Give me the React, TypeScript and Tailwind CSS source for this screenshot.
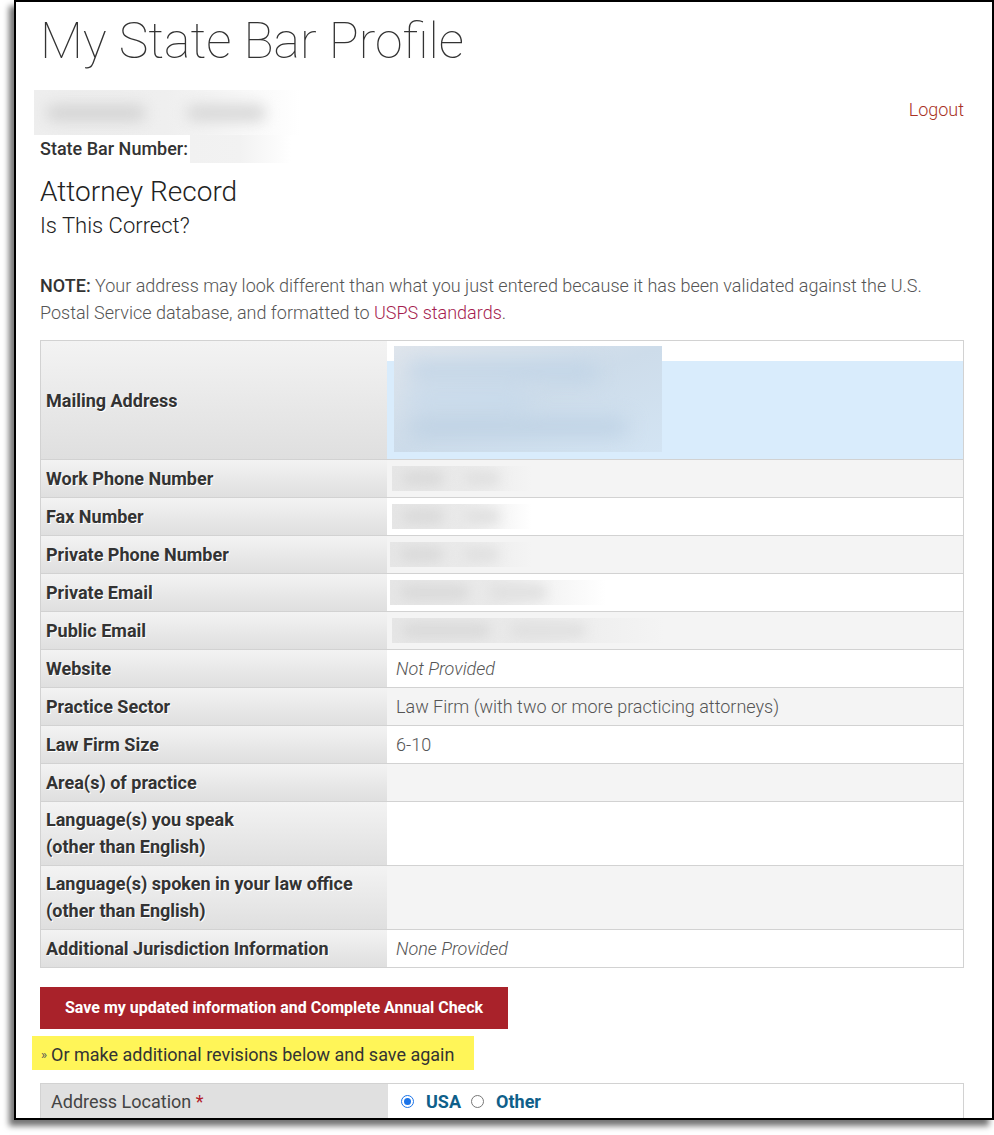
import React from "react";

const font = { fontFamily: "Roboto, 'Noto Sans', sans-serif" };

function Blur({ w, h }: { w: number; h: number }) {
  return (
    <div className="overflow-hidden bg-gradient-to-r from-[#e6e6e6] via-[#eaeaea] to-transparent" style={{ width: w, height: h }}>
      <div className="flex h-full items-center gap-[20px] px-[10px] blur-[6px]">
        <div className="h-[60%] w-[35%] rounded-full bg-[#dadada]" />
        <div className="h-[60%] w-[30%] rounded-full bg-[#e0e0e0]" />
      </div>
    </div>
  );
}

type Row = {
  label: React.ReactNode;
  value?: React.ReactNode;
  bg: string;
  tight?: boolean;
};

function Label({ children, tight }: { children: React.ReactNode; tight?: boolean }) {
  return (
    <div
      className={`flex items-center bg-gradient-to-b from-[#f3f3f3] to-[#dfdfdf] py-[5px] pl-[5px] text-[18px] font-bold text-[#333] [text-shadow:1px_1px_0_#fff] ${
        tight ? "leading-[26.5px]" : "leading-[27px]"
      }`}
    >
      <div>{children}</div>
    </div>
  );
}

function BlurCell({ w, pl }: { w: number; pl: string }) {
  return (
    <div className={`flex h-[27px] items-center ${pl}`}>
      <Blur w={w} h={25} />
    </div>
  );
}

export default function App() {
  const rows: Row[] = [
    { label: "Work Phone Number", value: <BlurCell w={140} pl="-ml-[4px]" />, bg: "bg-[#f4f4f4]" },
    { label: "Fax Number", value: <BlurCell w={140} pl="-ml-[4px]" />, bg: "bg-white" },
    { label: "Private Phone Number", value: <BlurCell w={142} pl="-ml-[6px]" />, bg: "bg-[#f4f4f4]" },
    { label: "Private Email", value: <BlurCell w={216} pl="-ml-[6px]" />, bg: "bg-white" },
    { label: "Public Email", value: <BlurCell w={272} pl="-ml-[4px]" />, bg: "bg-[#f4f4f4]" },
    { label: "Website", value: <span className="italic">Not Provided</span>, bg: "bg-white" },
    { label: "Practice Sector", value: "Law Firm (with two or more practicing attorneys)", bg: "bg-[#f4f4f4]" },
    { label: "Law Firm Size", value: "6-10", bg: "bg-white" },
    { label: "Area(s) of practice", value: "", bg: "bg-[#f4f4f4]" },
    { label: (<>Language(s) you speak<br />(other than English)</>), value: "", bg: "bg-white", tight: true },
    { label: (<>Language(s) spoken in your law office<br />(other than English)</>), value: "", bg: "bg-[#f4f4f4]", tight: true },
    { label: "Additional Jurisdiction Information", value: <span className="italic">None Provided</span>, bg: "bg-white" },
  ];

  return (
    <div className="min-h-screen w-[994px] bg-white" style={font}>
      <div className="ml-[14px] h-[1120px] w-[980px] overflow-hidden border-2 border-black bg-white shadow-[-5px_6px_6px_rgba(0,0,0,0.55)]">
        <div className="pl-[24px] pr-[28px] pt-[8px]">
          <h1 className="text-[50px] font-thin leading-[62px] text-[#333]">My State Bar Profile</h1>

          <div className="mt-[18px] flex items-start justify-between">
            <div className="-ml-[6px]">
              <div className="h-[45px] w-[266px] overflow-hidden bg-gradient-to-r from-[#eeeeee] via-[#efefef] to-white">
                <div className="flex h-full items-center gap-[40px] pl-[12px] blur-[7px]">
                  <div className="h-[18px] w-[100px] rounded-full bg-[#d6d6d6]" />
                  <div className="h-[18px] w-[80px] rounded-full bg-[#d9d9d9]" />
                </div>
              </div>
              <div className="flex h-[28px] items-center pl-[6px]">
                <span className="text-[18px] font-medium leading-[28px] text-[#333]">State Bar Number:</span>
                <div className="ml-[2px] h-[28px] w-[101px] bg-gradient-to-r from-[#f1f1f1] via-[#f2f2f2] to-white" />
              </div>
            </div>
            <a className="mt-[6px] text-[18px] font-light leading-[27px] text-[#a93226]">Logout</a>
          </div>

          <h2 className="mt-[11px] text-[28px] font-light leading-[36px] text-[#222]">Attorney Record</h2>
          <h3 className="mt-[2px] text-[22px] font-light leading-[28px] text-[#222]">Is This Correct?</h3>

          <p className="mt-[32px] text-[18px] font-light leading-[27px] text-[#555]">
            <span className="font-medium text-[#333]">NOTE:</span> Your address may look different than what you just entered because it has been validated against the U.S. Postal Service database, and formatted to{" "}
            <a className="text-[#a51d4f]">USPS standards</a>.
          </p>

          <div className="mt-[14px] border border-[#d2d2d2]">
            <div className="grid grid-cols-[346px_1fr]">
              <Label>Mailing Address</Label>
              <div className="bg-[linear-gradient(to_bottom,#fff_20px,#d9ecfc_20px)] pb-[7px] pl-[7px] pt-[5px]">
                <div className="h-[106px] w-[268px] overflow-hidden bg-gradient-to-br from-[#dfe5ec] via-[#cddcea] to-[#d3e4f3]">
                  <div className="flex h-full flex-col justify-center gap-[12px] px-[14px] blur-[10px]">
                    <div className="h-[16px] w-[190px] rounded-full bg-[#bfd3e6]" />
                    <div className="h-[16px] w-[120px] rounded-full bg-[#c6d9eb]" />
                    <div className="h-[16px] w-[220px] rounded-full bg-[#bcd0e3]" />
                  </div>
                </div>
              </div>
            </div>
            {rows.map((r, i) => (
              <div key={i} className="grid grid-cols-[346px_1fr] border-t border-[#d2d2d2]">
                <Label tight={r.tight}>{r.label}</Label>
                <div className={`${r.bg} py-[5px] pl-[9px] text-[18px] font-light leading-[27px] text-[#555]`}>
                  {r.value}
                </div>
              </div>
            ))}
          </div>

          <button className="mt-[19px] flex h-[42px] items-center bg-[#a9222a] px-[25px] text-[16px] font-bold text-white">
            Save my updated information and Complete Annual Check
          </button>

          <div className="-ml-[8px] mt-[7px] flex h-[34px] w-[442px] items-center bg-[#fff558] pl-[9px] pt-[3px] text-[18px] leading-[31px] text-[#333]">
            <span className="mr-[4px] text-[13px] text-[#555]">»</span>
            <span>Or make additional revisions below and save again</span>
          </div>

          <div className="mt-[13px] grid grid-cols-[347px_1fr] border border-[#d2d2d2]">
            <div className="bg-[#e0e0e0] pb-[8px] pl-[10px] pt-[4px] text-[18px] leading-[27px] text-[#444]">
              Address Location <span className="text-[#b3202a]">*</span>
            </div>
            <div className="flex items-center pb-[4px] pl-[13px] text-[18px] font-bold text-[#0f5f8a]">
              <span className="flex h-[13px] w-[13px] items-center justify-center rounded-full border border-[#1a73e8]">
                <span className="h-[7px] w-[7px] rounded-full bg-[#1a73e8]" />
              </span>
              <span className="ml-[12px]">USA</span>
              <span className="ml-[10px] h-[13px] w-[13px] rounded-full border border-[#777]" />
              <span className="ml-[12px]">Other</span>
            </div>
          </div>
        </div>
      </div>
    </div>
  );
}
